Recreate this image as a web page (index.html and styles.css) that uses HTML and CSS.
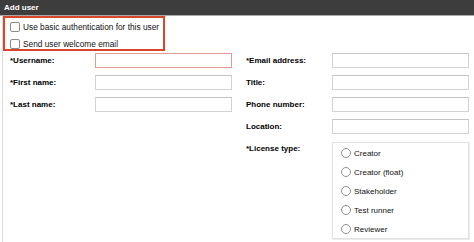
FILE: index.html
```html
<!DOCTYPE html>
<html lang="en">
<head>
    <meta charset="UTF-8">
    <title>Add user</title>
    <link rel="stylesheet" href="styles.css">
</head>
<body>
    <div class="titlebar">Add user</div>
    <div class="panel">
        <div class="options">
            <label class="check-row"><input type="checkbox"> Use basic authentication for this user</label>
            <label class="check-row"><input type="checkbox"> Send user welcome email</label>
        </div>

        <div class="form">
            <div class="col col-left">
                <div class="field">
                    <label>*Username:</label>
                    <input type="text" class="invalid">
                </div>
                <div class="field">
                    <label>*First name:</label>
                    <input type="text">
                </div>
                <div class="field">
                    <label>*Last name:</label>
                    <input type="text">
                </div>
            </div>

            <div class="col col-right">
                <div class="field">
                    <label>*Email address:</label>
                    <input type="text">
                </div>
                <div class="field">
                    <label>Title:</label>
                    <input type="text">
                </div>
                <div class="field">
                    <label>Phone number:</label>
                    <input type="text">
                </div>
                <div class="field">
                    <label>Location:</label>
                    <input type="text">
                </div>
                <div class="field license">
                    <label>*License type:</label>
                    <div class="radio-box">
                        <label class="radio-row"><input type="radio" name="license"> Creator</label>
                        <label class="radio-row"><input type="radio" name="license"> Creator (float)</label>
                        <label class="radio-row"><input type="radio" name="license"> Stakeholder</label>
                        <label class="radio-row"><input type="radio" name="license"> Test runner</label>
                        <label class="radio-row"><input type="radio" name="license"> Reviewer</label>
                    </div>
                </div>
            </div>
        </div>
    </div>
</body>
</html>
```

FILE: styles.css
```css
body {
    margin: 0;
    padding: 0;
    font-family: "Liberation Sans", Arial, sans-serif;
    font-size: 8px;
    color: #000;
    background: #fff;
}
.titlebar {
    height: 15px;
    line-height: 15px;
    padding-left: 4px;
    background: #3d3d3d;
    color: #fff;
    font-weight: bold;
    border-bottom: 1px solid #a9a9a9;
}
.panel {
    margin-left: 2px;
    border-left: 1px solid #dcdcdc;
    height: 226px;
}
.options {
    width: 153px;
    border: 2px solid #d9472b;
    padding: 4px 0 0 5px;
    display: flex;
    flex-direction: column;
    gap: 7px;
}
.check-row {
    display: flex;
    align-items: center;
    height: 10px;
    font-size: 8.3px;
    color: #111;
}
input[type="checkbox"], input[type="radio"] {
    appearance: none;
    -webkit-appearance: none;
    margin: 0 3px 0 0;
    width: 10px;
    height: 10px;
    border: 1px solid #8a8a8a;
    background: #fff;
    box-sizing: border-box;
    flex: none;
}
input[type="checkbox"] {
    border-radius: 2px;
}
input[type="radio"] {
    border-radius: 50%;
    border-color: #909090;
}
.form {
    display: flex;
    padding-left: 7px;
    margin-top: 2px;
}
.col-left {
    width: 222px;
}
.col-right {
    width: 223px;
    margin-left: 14px;
}
.field {
    display: flex;
    align-items: center;
    height: 15px;
    margin-bottom: 7px;
}
.field label {
    font-weight: bold;
    color: #000;
}
.col-left .field label {
    width: 85px;
}
.col-right .field label {
    width: 86px;
}
.field input[type="text"] {
    width: 137px;
    height: 15px;
    box-sizing: border-box;
    margin: 0;
    border: 1px solid #d2d2d2;
    border-top-color: #c4c4c4;
    background: #fff;
}
.field input.invalid {
    border-color: #e39a93;
}
.license {
    align-items: flex-start;
    height: auto;
}
.license label {
    padding-top: 3px;
}
.radio-box {
    width: 137px;
    box-sizing: border-box;
    margin-top: 1px;
    padding: 5px 0 4px 8px;
    border: 1px solid #e2e2e2;
    box-shadow: 1px 1px 0 #ececec;
    display: flex;
    flex-direction: column;
    gap: 9px;
}
.radio-box .radio-row {
    display: flex;
    align-items: center;
    height: 10px;
    padding-top: 0;
    font-weight: normal;
    width: auto;
    color: #111;
}
```
